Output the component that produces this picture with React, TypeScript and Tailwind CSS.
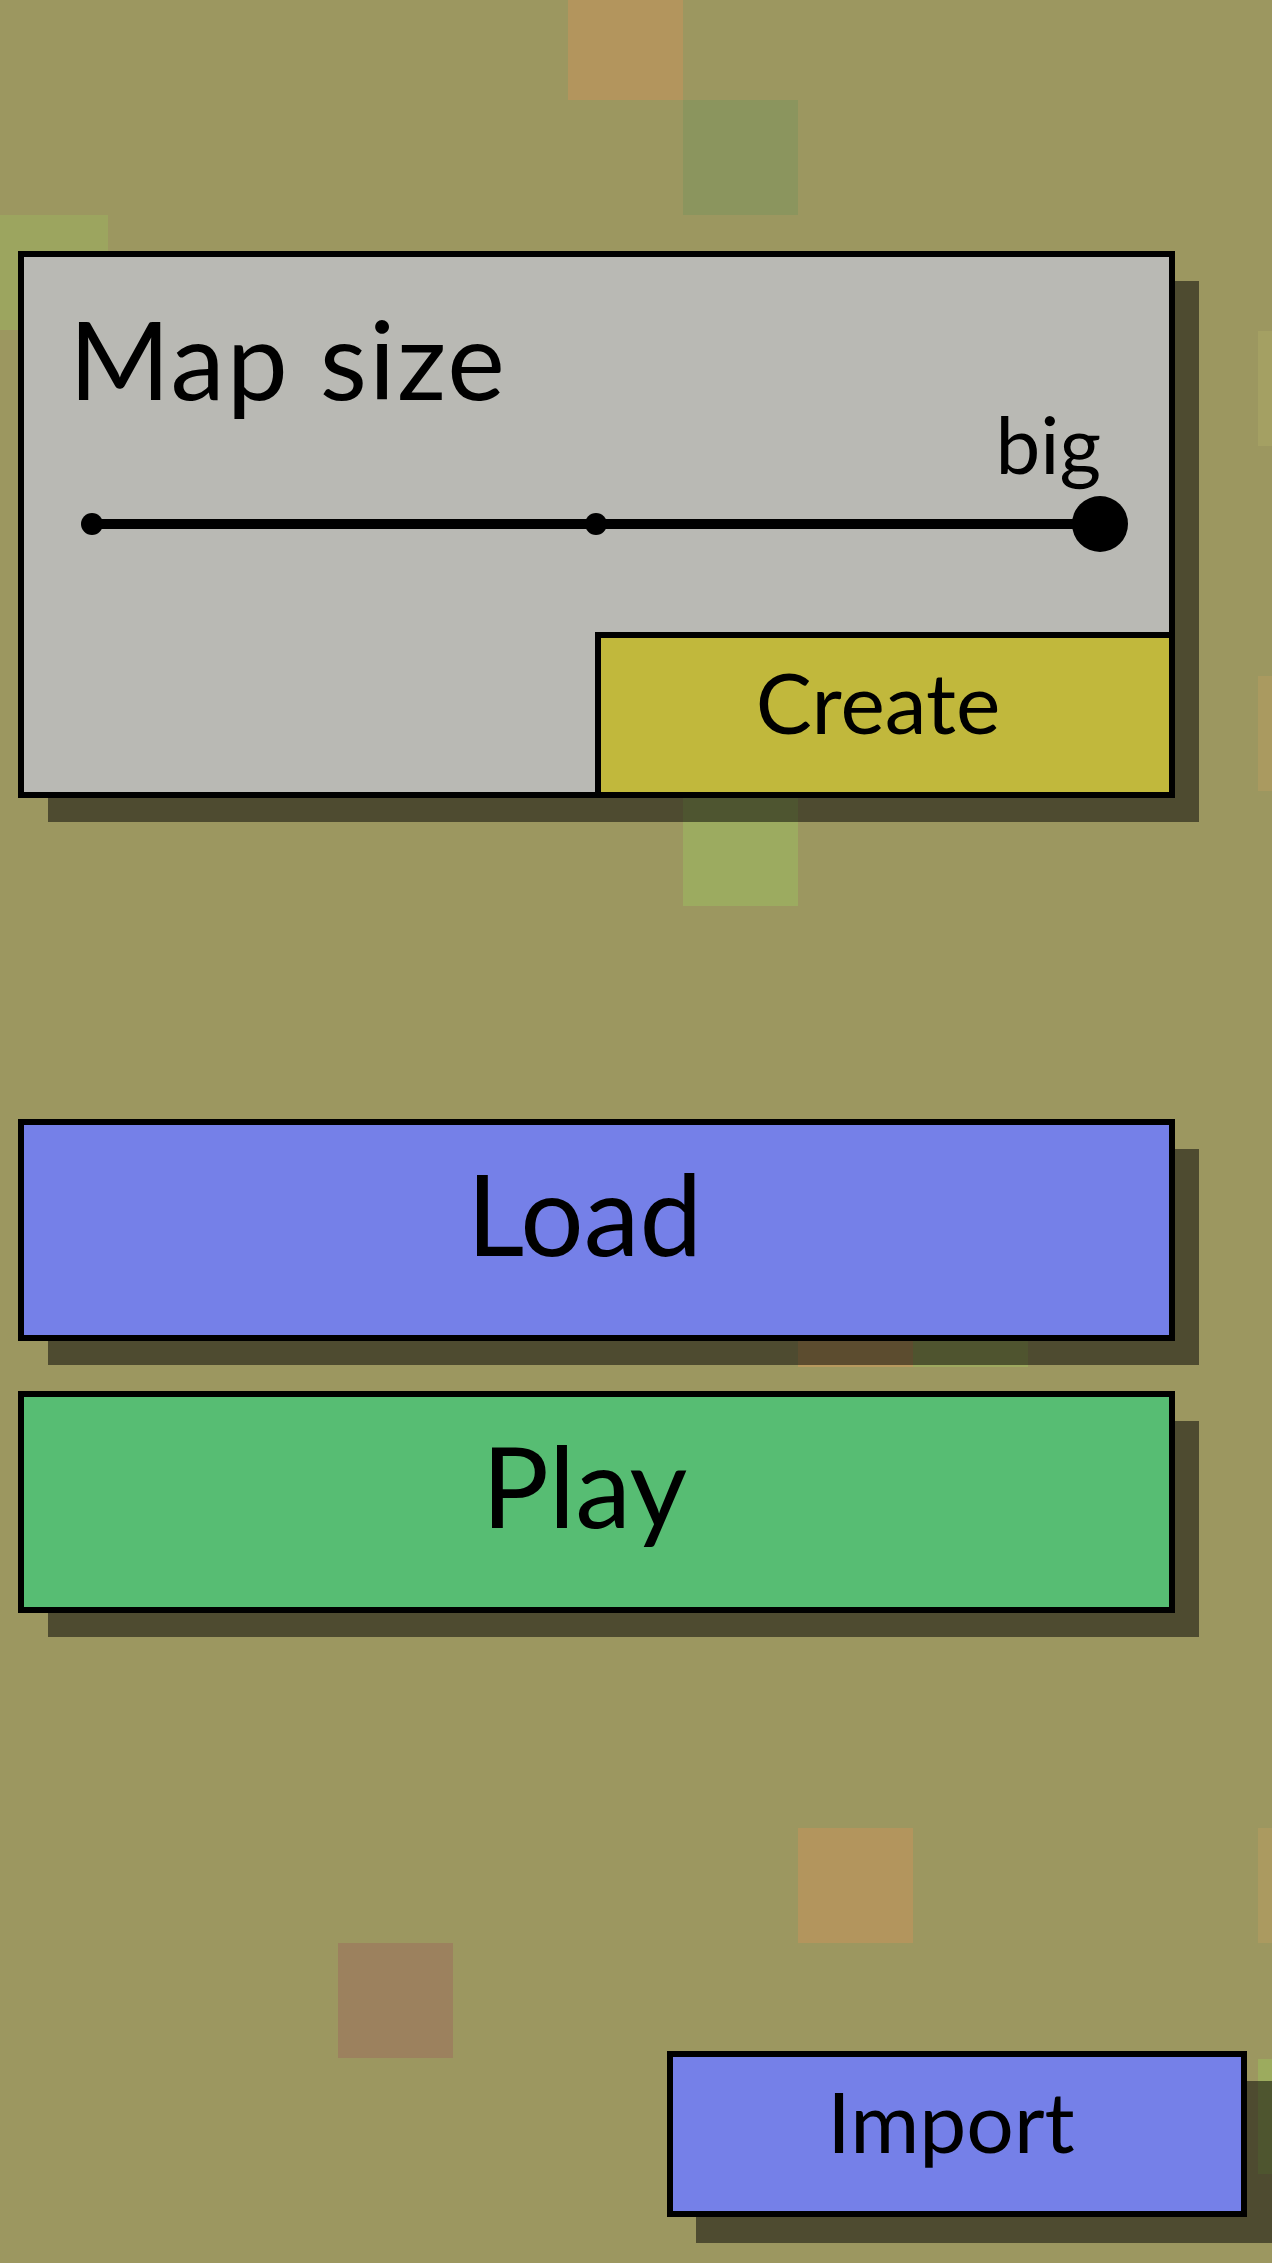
import React from "react";

type Sq = { c: number; r: number; color: string };

const squares: Sq[] = [
  { c: 5, r: 0, color: "#b3955d" },
  { c: 6, r: 1, color: "#8b955e" },
  { c: 0, r: 2, color: "#9ca55f" },
  { c: 11, r: 3, color: "#a4a063" },
  { c: 11, r: 6, color: "#aa9a60" },
  { c: 6, r: 7, color: "#9cab60" },
  { c: 7, r: 11, color: "#b8995e" },
  { c: 8, r: 11, color: "#9ea95f" },
  { c: 7, r: 16, color: "#b3955d" },
  { c: 11, r: 16, color: "#ab9a60" },
  { c: 3, r: 17, color: "#9c815e" },
  { c: 11, r: 18, color: "#9cab5e" },
];

export default function App() {
  return (
    <div className="relative min-h-[2263px] w-full overflow-hidden bg-[#9c9760] text-black [font-family:Lato,sans-serif]">
      <div aria-hidden="true" className="absolute inset-0">
        {squares.map((s, i) => (
          <div
            key={i}
            className="absolute h-[115px] w-[115px]"
            style={{
              left: -7 + 115 * s.c,
              top: Math.round(-15 + 115.2 * s.r),
              backgroundColor: s.color,
            }}
          />
        ))}
      </div>

      <div className="relative flex flex-col pl-[18px] pt-[251px]">
        <div className="flex h-[547px] w-[1157px] flex-col border-[6px] border-black bg-[#b9b9b4] shadow-[27px_27px_0_-3px_rgba(0,0,0,0.5)]">
          <div className="mt-[46px] h-[100px] whitespace-nowrap pl-[45px] text-[109px] leading-none tracking-[2px]">
            Map size
          </div>
          <div className="flex h-[80px] justify-end pr-[68px] text-[80px] leading-none">
            big
          </div>
          <div className="relative ml-[57px] mt-[13px] h-[56px] w-[1047px]">
            <div className="absolute left-[11px] right-[28px] top-[23px] h-[10px] bg-black" />
            <div className="absolute left-0 top-[17px] h-[22px] w-[22px] rounded-full bg-black" />
            <div className="absolute left-[504px] top-[17px] h-[22px] w-[22px] rounded-full bg-black" />
            <div className="absolute right-0 top-0 h-[56px] w-[56px] rounded-full bg-black" />
          </div>
          <button className="mt-auto flex h-[160px] w-[574px] items-center justify-center self-end border-l-[6px] border-t-[6px] border-black bg-[#c1b83c] pb-[26px] pr-[14px] text-[84px] leading-none">
            Create
          </button>
        </div>

        <button className="mt-[321px] flex h-[222px] w-[1157px] items-center justify-center border-[6px] border-black bg-[#7580e8] pb-[34px] pr-[24px] text-[112px] leading-none shadow-[27px_27px_0_-3px_rgba(0,0,0,0.5)]">
          Load
        </button>

        <button className="mt-[50px] flex h-[222px] w-[1157px] items-center justify-center border-[6px] border-black bg-[#57bd73] pb-[34px] pr-[24px] text-[112px] leading-none shadow-[27px_27px_0_-3px_rgba(0,0,0,0.5)]">
          Play
        </button>

        <button className="mr-[25px] mt-[438px] flex h-[166px] w-[580px] items-center justify-center self-end border-[6px] border-black bg-[#7580e8] pb-[26px] pr-[12px] text-[84px] leading-none shadow-[27px_28px_0_-2px_rgba(0,0,0,0.5)]">
          Import
        </button>
      </div>
    </div>
  );
}
